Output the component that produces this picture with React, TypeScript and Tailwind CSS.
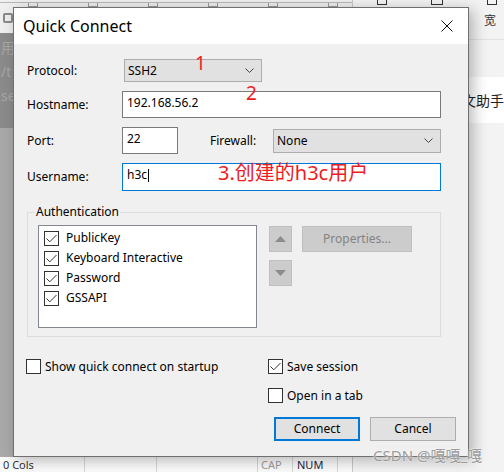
import type { ReactNode } from 'react'

function Check({ checked }: { checked?: boolean }) {
  return (
    <span className="flex h-[15px] w-[15px] shrink-0 items-center justify-center border border-[#333333] bg-white">
      {checked && (
        <svg width="11" height="9" viewBox="0 0 11 9" fill="none">
          <polyline points="0.5,4.5 3.8,7.8 10.5,1" stroke="#333333" strokeWidth="1" />
        </svg>
      )}
    </span>
  )
}

function Chevron() {
  return (
    <svg width="9" height="5" viewBox="0 0 9 5" fill="none">
      <polyline points="0.5,0.5 4.5,4.5 8.5,0.5" stroke="#444444" strokeWidth="1" />
    </svg>
  )
}

function Label({ children }: { children: ReactNode }) {
  return <span className="w-[95px] shrink-0 text-[12px] text-black">{children}</span>
}

function Select({ value, className }: { value: string; className: string }) {
  return (
    <div className={`flex items-center justify-between border border-[#adadad] bg-[#e1e1e1] pl-[3px] pr-[7px] text-[12px] text-black ${className}`}>
      <span>{value}</span>
      <Chevron />
    </div>
  )
}

const methods = ['PublicKey', 'Keyboard Interactive', 'Password', 'GSSAPI']

function Dialog() {
  return (
    <div className="absolute left-[13px] top-[7px] h-[450px] w-[456px] border border-[#6f6f6f] bg-[#f0f0f0] shadow-[4px_3px_14px_rgba(0,0,0,0.28)]">
      {/* title bar */}
      <div className="flex h-[36px] items-center justify-between bg-white pl-[9px] pr-[15px]">
        <span className="text-[16px] text-black">Quick Connect</span>
        <svg width="12" height="12" viewBox="0 0 12 12" fill="none">
          <line x1="0.5" y1="0.5" x2="11.5" y2="11.5" stroke="#111" strokeWidth="1" />
          <line x1="11.5" y1="0.5" x2="0.5" y2="11.5" stroke="#111" strokeWidth="1" />
        </svg>
      </div>

      <div className="pl-[13px] pt-[15px]">
        <div className="flex h-[23px] items-center">
          <Label>Protocol:</Label>
          <Select value="SSH2" className="ml-[2px] h-[23px] w-[138px]" />
        </div>
        <div className="mt-[9px] flex h-[27px] items-center">
          <Label>Hostname:</Label>
          <div className="flex h-[27px] w-[319px] items-center border border-[#7a7a7a] bg-white pb-[3px] pl-[4px] text-[12px] text-black">
            192.168.56.2
          </div>
        </div>
        <div className="mt-[9px] flex h-[27px] items-center">
          <Label>Port:</Label>
          <div className="flex h-[27px] w-[56px] items-center border border-[#7a7a7a] bg-white pb-[4px] pl-[4px] text-[12px] text-black">
            22
          </div>
          <span className="ml-[32px] w-[63px] text-[12px] text-black">Firewall:</span>
          <Select value="None" className="h-[24px] w-[168px]" />
        </div>
        <div className="mt-[9px] flex h-[28px] items-center">
          <Label>Username:</Label>
          <div className="flex h-[28px] w-[319px] items-center border border-[#0078d7] bg-white pb-[4px] pl-[4px] text-[12px] text-black">
            h3c
            <span className="ml-[1px] h-[13px] w-[1px] bg-black" />
          </div>
        </div>

        {/* Authentication group */}
        <div className="relative mt-[21px] h-[125px] w-[414px] border border-[#dcdcdc] pl-[10px] pt-[12px]">
          <span className="absolute left-[7px] top-[-9px] bg-[#f0f0f0] px-px text-[12px] leading-[16px] text-black">
            Authentication
          </span>
          <div className="flex">
            <div className="h-[103px] w-[219px] border border-[#828790] bg-white pl-[5px] pt-[2px]">
              {methods.map(m => (
                <div key={m} className="flex h-[20px] items-center gap-[7px] text-[12px] text-black">
                  <Check checked />
                  <span>{m}</span>
                </div>
              ))}
            </div>
            <div className="ml-[12px] mt-px flex flex-col gap-[8px]">
              <div className="flex h-[26px] w-[23px] items-center justify-center border border-[#bfbfbf] bg-[#cccccc]">
                <svg width="11" height="6" viewBox="0 0 11 6">
                  <polygon points="0,6 5.5,0 11,6" fill="#8c8c8c" />
                </svg>
              </div>
              <div className="flex h-[26px] w-[23px] items-center justify-center border border-[#bfbfbf] bg-[#cccccc]">
                <svg width="11" height="6" viewBox="0 0 11 6">
                  <polygon points="0,0 11,0 5.5,6" fill="#8c8c8c" />
                </svg>
              </div>
            </div>
            <div className="ml-[10px] mt-px flex h-[26px] w-[110px] items-center justify-center border border-[#bfbfbf] bg-[#cccccc] text-[12px] text-[#838383]">
              Properties...
            </div>
          </div>
        </div>

        {/* bottom options */}
        <div className="mt-[22px] flex">
          <div className="-ml-px flex h-[15px] w-[242px] items-center gap-[4px] text-[12px] text-black">
            <Check />
            <span>Show quick connect on startup</span>
          </div>
          <div className="flex flex-col">
            <div className="flex h-[15px] items-center gap-[4px] text-[12px] text-black">
              <Check checked />
              <span>Save session</span>
            </div>
            <div className="mt-[14px] flex h-[15px] items-center gap-[4px] text-[12px] text-black">
              <Check />
              <span>Open in a tab</span>
            </div>
            <div className="ml-[6px] mt-[14px] flex gap-[10px]">
              <div className="flex h-[24px] w-[86px] items-center justify-center border-2 border-[#0078d7] bg-[#e1e1e1] text-[12px] text-black">
                Connect
              </div>
              <div className="flex h-[24px] w-[86px] items-center justify-center border border-[#adadad] bg-[#e1e1e1] text-[12px] text-black">
                Cancel
              </div>
            </div>
          </div>
        </div>
      </div>

      {/* red annotations */}
      <span className="absolute left-[181px] top-[46px] text-[19px] leading-none text-[#ed1c24]">1</span>
      <span className="absolute left-[232px] top-[76px] text-[19px] leading-none text-[#ed1c24]">2</span>
      <span className="absolute left-[204px] top-[155px] text-[20px] leading-none text-[#ed1c24]">3.创建的h3c用户</span>
    </div>
  )
}

export default function App() {
  return (
    <div className="relative flex h-[472px] w-[504px] overflow-hidden bg-[#f0f0f0] font-['Noto_Sans','Noto_Sans_CJK_SC',sans-serif]">
      {/* app behind, left part */}
      <div className="flex w-[361px] flex-col border-r border-[#c8c8c8]">
        <div className="h-[33px] bg-[#efefef] pt-[2px]">
          <div className="h-px bg-[#b8b8b8]" />
          <div className="flex items-start gap-[50px] pl-[28px]">
            <span className="h-[4px] w-[10px] border border-t-0 border-[#9a9a9a]" />
            <span className="h-[4px] w-[10px] border border-t-0 border-[#9a9a9a]" />
            <span className="h-[4px] w-[10px] border border-t-0 border-[#9a9a9a]" />
            <span className="h-[4px] w-[10px] border border-t-0 border-[#9a9a9a]" />
            <span className="h-[4px] w-[10px] border border-t-0 border-[#9a9a9a]" />
            <span className="h-[4px] w-[10px] border border-t-0 border-[#9a9a9a]" />
          </div>
          <span className="ml-[3px] mt-[6px] block h-[10px] w-[10px] rounded-[2px] border-2 border-[#8a8a8a]" />
        </div>
        <div className="flex h-[95px] flex-col gap-[6px] bg-[#8b8b8b] pl-[1px] pt-[6px] text-[14px] leading-[18px] text-[#a8a8a8]">
          <span>用</span>
          <span>/t</span>
          <span>se</span>
        </div>
        <div className="flex-1 bg-[#a9a9a9]" />
        <div className="flex h-[15px] items-center bg-[#fafafa] text-[11px] leading-[15px]">
          <span className="w-[85px] border-r border-[#d6d6d6] pl-[3px] text-[#333]">0 Cols</span>
          <span className="w-[72px] border-r border-[#d6d6d6]">&nbsp;</span>
          <span className="w-[101px] border-r border-[#d6d6d6]">&nbsp;</span>
          <span className="w-[35px] border-r border-[#d6d6d6] pl-[3px] text-[#9a9a9a]">CAP</span>
          <span className="w-[45px] border-r border-[#d6d6d6] pl-[4px] text-[#1a1a3a]">NUM</span>
        </div>
      </div>

      {/* right side panel */}
      <div className="flex flex-1 flex-col bg-[#f3f3f3]">
        <div className="flex h-[14px] items-start gap-[44px] pl-[24px]">
          <span className="h-[5px] w-[10px] border border-t-0 border-[#333]" />
          <span className="h-[5px] w-[12px] border border-t-0 border-[#333]" />
          <span className="h-[5px] w-[10px] border border-t-0 border-[#333]" />
        </div>
        <div className="h-[26px] border-b border-[#e2e2e2] pl-[131px] text-[12px] leading-[14px] text-[#333]">宽</div>
        <div className="h-[37px]" />
        <div className="flex h-[46px] items-center overflow-hidden whitespace-nowrap bg-white pl-[109px] text-[14px] text-[#222]">
          文助手
        </div>
        <div className="flex-1" />
      </div>

      <Dialog />

      <span className="absolute left-[373px] top-[446px] text-[15px] leading-[18px] text-[#9c9c9c] [text-shadow:0_0_2px_#fff]">
        CSDN @嘎嘎_嘎
      </span>
    </div>
  )
}
